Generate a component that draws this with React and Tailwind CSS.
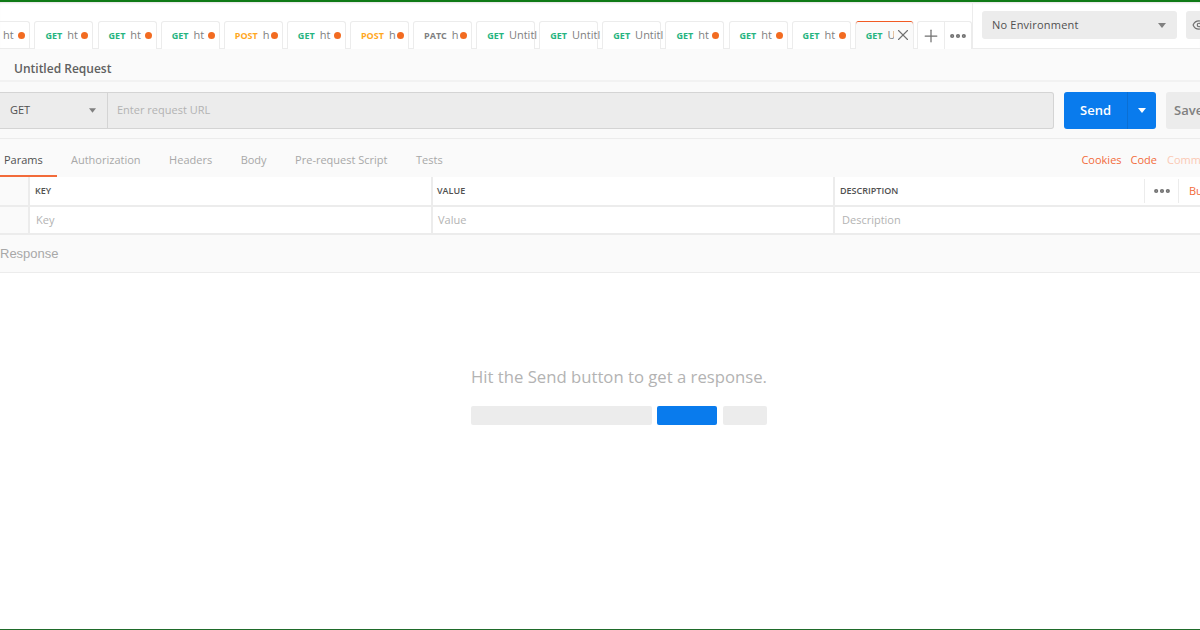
import { Plus, X, Eye, MoreHorizontal } from 'lucide-react'

const tabs = [
  { method: 'GET', name: 'ht', dirty: true },
  { method: 'GET', name: 'ht', dirty: true },
  { method: 'GET', name: 'ht', dirty: true },
  { method: 'POST', name: 'h', dirty: true },
  { method: 'GET', name: 'ht', dirty: true },
  { method: 'POST', name: 'h', dirty: true },
  { method: 'PATC', name: 'h', dirty: true },
  { method: 'GET', name: 'Untitl' },
  { method: 'GET', name: 'Untitl' },
  { method: 'GET', name: 'Untitl' },
  { method: 'GET', name: 'ht', dirty: true },
  { method: 'GET', name: 'ht', dirty: true },
  { method: 'GET', name: 'ht', dirty: true },
  { method: 'GET', name: 'U', active: true },
]

const methodColor = {
  GET: 'text-[#26b47f]',
  POST: 'text-[#ffa81f]',
  PATC: 'text-[#808080]',
}

const subTabs = ['Authorization', 'Headers', 'Body', 'Pre-request Script', 'Tests']

function Caret({ className }) {
  return (
    <svg viewBox="0 0 8 5" className={className}>
      <path d="M0 0h8L4 5z" fill="currentColor" />
    </svg>
  )
}

function RequestTab({ tab }) {
  return (
    <div
      className={`flex h-7 w-[59px] shrink-0 items-center rounded-t-[3px] border-x pl-[10px] ${
        tab.active ? 'border-x-[#ececec] bg-[#fafafa] shadow-[inset_0_1px_0_#f15a24]' : 'border-t border-[#ececec] bg-white'
      }`}
    >
      <span className={`shrink-0 text-[9px] leading-none font-bold whitespace-nowrap ${methodColor[tab.method]}`}>
        {tab.method}
      </span>
      <span className={`ml-[5px] min-w-0 flex-1 text-[11px] whitespace-nowrap text-[#808080] ${tab.active ? 'overflow-hidden' : ''}`}>
        {tab.name}
      </span>
      {tab.dirty && <span className="mr-[4px] h-[7px] w-[7px] shrink-0 rounded-full bg-[#f26b21]" />}
      {tab.active && <X className="mr-px h-[18px] w-[18px] shrink-0 text-[#707070]" strokeWidth={1.5} />}
    </div>
  )
}

export default function App() {
  return (
    <div className="flex h-[630px] w-[1200px] flex-col overflow-hidden border-t-2 border-b border-t-[#0f7a16] border-b-[#1f6b2a] bg-white font-['Open_Sans',sans-serif]">
      {/* tab strip */}
      <div className="flex h-[47px] shrink-0 items-end border-b border-[#ececec] shadow-[inset_0_2px_2px_-1px_rgba(0,0,0,0.12)]">
        <div className="-mb-px flex w-[972px] shrink-0 gap-[4.1px]">
          {/* first tab is scrolled out on the left */}
          <div className="flex h-7 w-[30.4px] shrink-0 items-center rounded-tr-[3px] border-t border-r border-[#ececec] pl-[3px]">
            <span className="flex-1 text-[11px] text-[#808080]">ht</span>
            <span className="mr-[4px] h-[7px] w-[7px] shrink-0 rounded-full bg-[#f26b21]" />
          </div>
          {tabs.map((tab, index) => (
            <RequestTab key={index} tab={tab} />
          ))}
          <div className="-ml-px flex h-7 shrink-0 rounded-t-[3px] border-x border-t border-[#ececec] bg-white">
            <div className="flex w-[27px] items-center justify-center border-r border-[#ececec]">
              <Plus className="h-5 w-5 text-[#707070]" strokeWidth={1.5} />
            </div>
            <div className="flex w-[26px] items-center justify-center">
              <MoreHorizontal className="h-5 w-5 text-[#707070]" strokeWidth={3} />
            </div>
          </div>
        </div>
        <div className="flex h-full shrink-0 items-center gap-[9px] border-l border-[#ececec] pl-[9px]">
          <div className="flex h-7 w-[195px] items-center justify-between rounded-[3px] bg-[#ececec] pr-[11px] pl-[10px] text-[11px] tracking-[0.2px] text-[#505050]">
            No Environment
            <Caret className="h-[5px] w-[8px] text-[#808080]" />
          </div>
          <div className="flex h-7 w-[40px] items-center rounded-[3px] bg-[#ececec] pl-[6px]">
            <Eye className="h-[14px] w-[14px] text-[#707070]" />
          </div>
        </div>
      </div>

      {/* request name */}
      <div className="flex h-[33px] shrink-0 items-center border-b-2 border-[#f2f2f2] bg-[#fafafa] pt-[8px] pl-[14px] text-[12px] font-semibold text-[#606060]">
        Untitled Request
      </div>

      {/* url bar */}
      <div className="flex h-[57px] shrink-0 items-start border-b border-[#ececec] bg-[#fafafa] pt-[10px]">
        <div className="flex h-[37px] w-[1054px] shrink-0 rounded-r-[3px] border border-l-0 border-[#d4d4d4] bg-[#ececec]">
          <div className="flex w-[108px] items-center justify-between border-r border-[#d4d4d4] pr-[11px] pl-[10px] text-[11px] text-[#505050]">
            GET
            <Caret className="h-[5px] w-[7px] text-[#808080]" />
          </div>
          <div className="flex flex-1 items-center pl-[9px] text-[11px] text-[#b3b3b3]">Enter request URL</div>
        </div>
        <div className="ml-[10px] flex h-[37px] w-[92px] shrink-0 rounded-[3px] bg-[#097bed] text-white">
          <div className="flex w-[64px] items-center justify-center border-r border-[#0a6fd4] pt-px text-[13px] font-semibold">Send</div>
          <div className="flex flex-1 items-center justify-center">
            <Caret className="h-[5px] w-[8px]" />
          </div>
        </div>
        <div className="ml-[10px] flex h-[37px] w-[60px] shrink-0 items-center rounded-[3px] bg-[#ececec] pt-px pl-[8px] text-[13px] font-semibold text-[#808080]">
          Save
        </div>
      </div>

      {/* params, auth, ... */}
      <div className="flex h-[38px] shrink-0 items-stretch bg-[#fafafa] text-[11px]">
        <div className="flex w-[57px] shrink-0 items-center border-b-2 border-[#f26b3a] pt-[6px] pl-[4px] text-[#505050]">Params</div>
        <div className="ml-[14px] flex items-center gap-[28.5px] pt-[6px] pb-[2px] text-[#a8a8a8]">
          {subTabs.map((name) => (
            <span key={name}>{name}</span>
          ))}
        </div>
        <div className="ml-auto flex items-center gap-[9px] pt-[6px] pb-[1px] whitespace-nowrap text-[#f26b3a]">
          <span>Cookies</span>
          <span className="mr-px">Code</span>
          <span className="w-[33px] text-[#fbc9b4]">Comm</span>
        </div>
      </div>

      {/* params table */}
      <div className="flex shrink-0 flex-col gap-[2px] bg-[#ececec] pb-[2px]">
        <div className="grid h-[28px] grid-cols-[28px_401px_400px_1fr] gap-x-[2px] text-[9px] font-semibold text-[#505050]">
          <div className="bg-[#fafafa]" />
          <div className="flex items-center bg-white pl-[5px]">KEY</div>
          <div className="flex items-center bg-white pl-[4px]">VALUE</div>
          <div className="flex items-center bg-white pl-[5px]">
            DESCRIPTION
            <div className="ml-auto flex h-[24px] items-stretch">
              <div className="flex w-[35px] items-center justify-center border-x border-[#ececec] text-[#707070]">
                <MoreHorizontal className="h-5 w-5" strokeWidth={3} />
              </div>
              <span className="ml-[10px] flex w-[11px] items-center text-[11px] font-normal text-[#f26b3a]">Bu</span>
            </div>
          </div>
        </div>
        <div className="grid h-[26px] grid-cols-[28px_401px_400px_1fr] gap-x-[2px] text-[11px] text-[#b3b3b3]">
          <div className="bg-[#fafafa]" />
          <div className="flex items-center bg-white pl-[6px]">Key</div>
          <div className="flex items-center bg-white pl-[5px]">Value</div>
          <div className="flex items-center bg-white pl-[7px]">Description</div>
        </div>
      </div>

      {/* response header */}
      <div className="flex h-[38px] shrink-0 items-center border-b border-[#ececec] bg-[#fafafa] font-['Liberation_Sans',sans-serif] text-[13px] text-[#a8a8a8]">
        Response
      </div>

      {/* empty response */}
      <div className="flex flex-1 flex-col items-center pt-[92px] pl-[38px]">
        <div className="text-[16.7px] leading-[24px] text-[#b3b3b3]">Hit the Send button to get a response.</div>
        <div className="mt-[17px] flex gap-[5px]">
          <div className="h-[19px] w-[181px] rounded-[2px] bg-[#ececec]" />
          <div className="h-[19px] w-[60px] rounded-[2px] bg-[#097bed]" />
          <div className="ml-px h-[19px] w-[44px] rounded-[2px] bg-[#ececec]" />
        </div>
      </div>
    </div>
  )
}
